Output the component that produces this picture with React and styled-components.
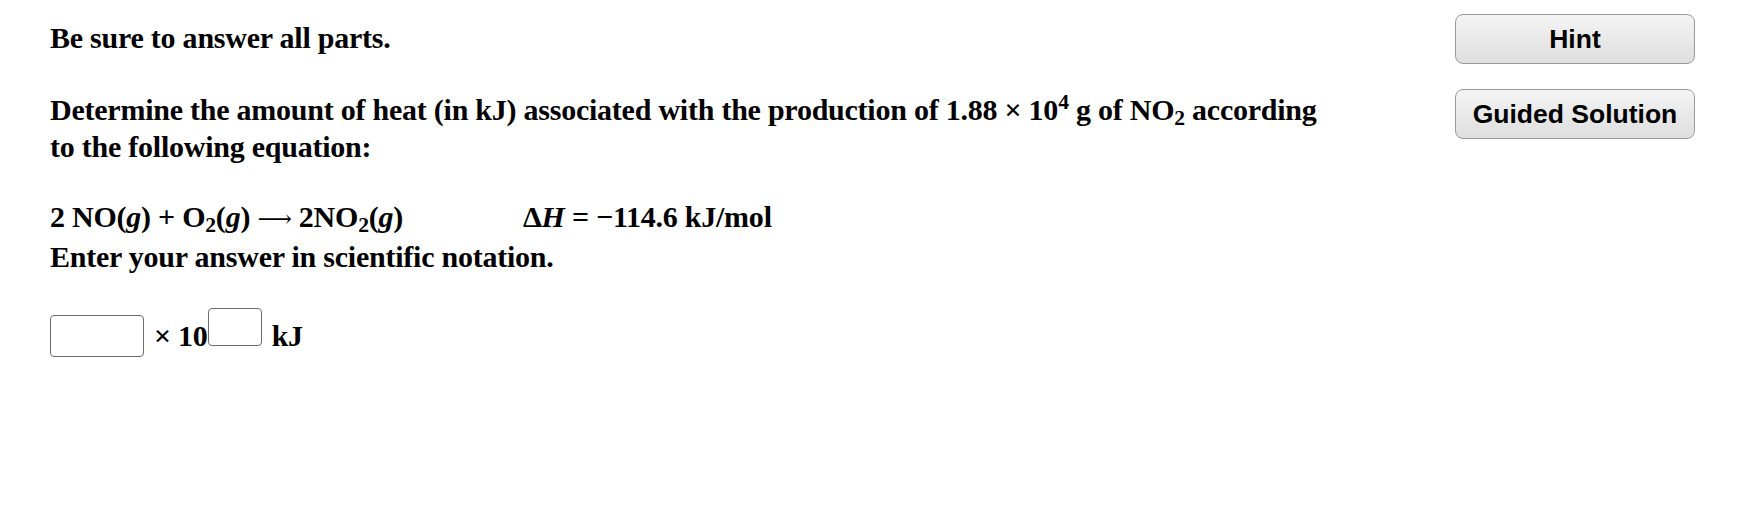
import React from 'react';
import styled, {createGlobalStyle} from 'styled-components';

const GlobalStyle = createGlobalStyle`
  body {
    margin: 0;
    background: #fff;
    color: #000;
    font-family: "Liberation Serif", "Times New Roman", serif;
  }
`;

const Page = styled.div`
  display: grid;
  grid-template-columns: 1fr 240px;
  column-gap: 40px;
  padding: 14px 63px 0 50px;
  height: 521px;
  box-sizing: border-box;
`;

const Question = styled.div`
  padding-top: 8px;
  font-weight: bold;
  font-size: 30px;
  letter-spacing: -0.24px;
`;

const Para = styled.p`
  margin: 0 0 ${(p) => p.gap || 0}px;
  line-height: ${(p) => p.lh || 31}px;
  max-width: ${(p) => p.max || 1300}px;
`;

const Equation = styled.div`
  display: grid;
  grid-template-columns: 473px auto;
  line-height: 37px;
`;

const Arrow = styled.span`
  font-weight: normal;
  font-family: "DejaVu Serif", serif;
  font-size: 24px;
`;

const Sub = styled.sub`
  font-size: 0.72em;
  vertical-align: -0.25em;
  line-height: 0;
`;

const Sup = styled.sup`
  font-size: 0.72em;
  vertical-align: 0.5em;
  line-height: 0;
`;

const AnswerRow = styled.div`
  display: flex;
  align-items: flex-start;
  margin-top: 33px;
  line-height: 30px;
`;

const Box = styled.div`
  box-sizing: border-box;
  width: ${(p) => p.w}px;
  height: ${(p) => p.h}px;
  margin-top: ${(p) => p.top || 0}px;
  border: 1.5px solid #6b6b6b;
  border-radius: 4px;
  background: #fff;
`;

const Unit = styled.span`
  margin: 13px ${(p) => p.right || 0}px 0 ${(p) => p.left || 0}px;
`;

const Side = styled.div`
  display: flex;
  flex-direction: column;
  gap: 25px;
`;

const Button = styled.button`
  height: 50px;
  width: 240px;
  border: 1.5px solid #9a9a9a;
  border-radius: 8px;
  background: linear-gradient(#f4f4f4, #dedede);
  font-family: "Liberation Sans", Arial, sans-serif;
  font-weight: bold;
  font-size: 26.5px;
  color: #000;
  padding: 0;
`;

export default function App() {
  return (
    <>
      <GlobalStyle />
      <Page>
        <Question>
          <Para gap={38}>Be sure to answer all parts.</Para>
          <Para gap={33} lh={37} max={1290}>
            Determine the amount of heat (in kJ) associated with the production of 1.88 × 10<Sup>4</Sup> g of NO<Sub>2</Sub> according to the following equation:
          </Para>
          <Equation>
            <span>
              2 NO(<i>g</i>) + O<Sub>2</Sub>(<i>g</i>) <Arrow>⟶</Arrow> 2NO<Sub>2</Sub>(<i>g</i>)
            </span>
            <span>
              Δ<i>H</i> = −114.6 kJ/mol
            </span>
          </Equation>
          <Para lh={37}>Enter your answer in scientific notation.</Para>
          <AnswerRow>
            <Box w={94} h={42} top={7} />
            <Unit left={10}>× 10</Unit>
            <Box w={54} h={38} />
            <Unit left={10}>kJ</Unit>
          </AnswerRow>
        </Question>
        <Side>
          <Button>Hint</Button>
          <Button>Guided Solution</Button>
        </Side>
      </Page>
    </>
  );
}
